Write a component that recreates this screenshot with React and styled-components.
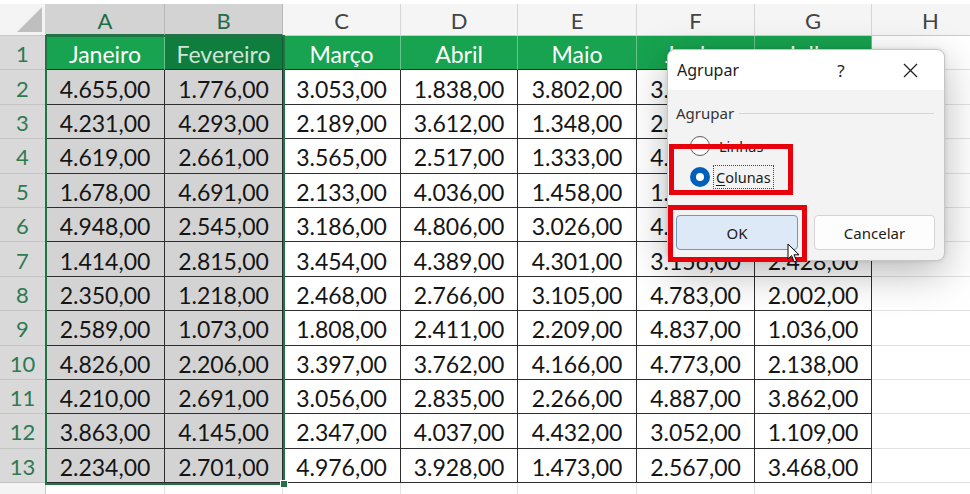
import React from 'react'
import styled, { createGlobalStyle, css } from 'styled-components'

const GlobalStyle = createGlobalStyle`
  html, body {
    margin: 0;
    padding: 0;
    background: #fff;
    overflow: hidden;
  }
`

const COLS = ['A', 'B', 'C', 'D', 'E', 'F', 'G', 'H']
const WIDTHS = [119, 118, 118, 117, 119, 118, 117, 118]

const MONTHS = ['Janeiro', 'Fevereiro', 'Março', 'Abril', 'Maio', 'Junho', 'Julho']

const DATA = [
  ['4.655,00', '1.776,00', '3.053,00', '1.838,00', '3.802,00', '3.417,00', '2.950,00'],
  ['4.231,00', '4.293,00', '2.189,00', '3.612,00', '1.348,00', '2.904,00', '1.283,00'],
  ['4.619,00', '2.661,00', '3.565,00', '2.517,00', '1.333,00', '4.112,00', '3.704,00'],
  ['1.678,00', '4.691,00', '2.133,00', '4.036,00', '1.458,00', '1.562,00', '4.219,00'],
  ['4.948,00', '2.545,00', '3.186,00', '4.806,00', '3.026,00', '4.330,00', '2.871,00'],
  ['1.414,00', '2.815,00', '3.454,00', '4.389,00', '4.301,00', '3.156,00', '2.428,00'],
  ['2.350,00', '1.218,00', '2.468,00', '2.766,00', '3.105,00', '4.783,00', '2.002,00'],
  ['2.589,00', '1.073,00', '1.808,00', '2.411,00', '2.209,00', '4.837,00', '1.036,00'],
  ['4.826,00', '2.206,00', '3.397,00', '3.762,00', '4.166,00', '4.773,00', '2.138,00'],
  ['4.210,00', '2.691,00', '3.056,00', '2.835,00', '2.266,00', '4.887,00', '3.862,00'],
  ['3.863,00', '4.145,00', '2.347,00', '4.037,00', '4.432,00', '3.052,00', '1.109,00'],
  ['2.234,00', '2.701,00', '4.976,00', '3.928,00', '1.473,00', '2.567,00', '3.468,00'],
]

const Page = styled.div`
  position: relative;
  width: 970px;
  height: 494px;
  overflow: hidden;
  padding-top: 4px;
  box-sizing: border-box;
  font-family: Lato, 'Liberation Sans', sans-serif;
`

const Grid = styled.div`
  position: relative;
  display: grid;
  grid-template-columns: 46px ${WIDTHS.map(w => w + 'px').join(' ')};
  grid-template-rows: 32px repeat(14, 34.4px);
  width: max-content;
`

const Corner = styled.div`
  display: flex;
  align-items: flex-end;
  justify-content: flex-end;
  padding: 0 3px 3px 0;
  background: #f4f4f4;
  border-right: 1px solid #d2d2d2;
  border-bottom: 1px solid #c8c8c8;
`

const CornerMark = styled.span`
  width: 25px;
  height: 25px;
  background: #bfbfbf;
  clip-path: polygon(100% 0, 100% 100%, 0 100%);
`

const ColHead = styled.div`
  display: flex;
  align-items: center;
  justify-content: center;
  padding-top: 2px;
  font-size: 22px;
  background: ${p => (p.$sel ? '#d3d3d3' : '#f5f5f5')};
  color: ${p => (p.$sel ? '#1f6b42' : '#444')};
  border-right: 1px solid ${p => (p.$sel ? '#b8b8b8' : '#d6d6d6')};
  border-bottom: ${p => (p.$sel ? '2px solid #217346' : '1px solid #cbcbcb')};
`

const RowHead = styled.div`
  display: flex;
  align-items: center;
  justify-content: center;
  padding-top: 2px;
  font-size: 22px;
  background: ${p => (p.$sel ? '#d9d9d9' : '#f4f4f4')};
  color: ${p => (p.$sel ? '#2e7a51' : '#555')};
  border-bottom: 1px solid #c4c4c4;
  border-right: 1px solid #c8c8c8;
`

const Cell = styled.div`
  display: flex;
  align-items: center;
  justify-content: center;
  padding-top: 3px;
  font-size: 23px;
  white-space: nowrap;
  overflow: hidden;
  ${p =>
    p.$kind === 'head' &&
    css`
      background: ${p.$sel ? '#0f7d3d' : '#17a34f'};
      color: ${p.$sel ? '#cfe6d7' : '#fff'};
      border-right: 1px solid ${p.$sel ? '#0b5f2e' : 'rgba(255,255,255,0.35)'};
      border-bottom: 1px solid #2c2c2c;
    `}
  ${p =>
    p.$kind === 'data' &&
    css`
      background: ${p.$sel ? '#d3d3d3' : '#fff'};
      color: #151515;
      border-right: 1px solid #2e2e2e;
      border-bottom: 1px solid #2e2e2e;
    `}
  ${p =>
    p.$kind === 'empty' &&
    css`
      background: #fff;
      border-right: 1px solid #e2e2e2;
      border-bottom: 1px solid #e2e2e2;
    `}
`

const SelectionFrame = styled.div`
  position: absolute;
  left: 45px;
  top: 31px;
  width: 240px;
  height: 450px;
  box-sizing: border-box;
  border: 2px solid #217346;
  pointer-events: none;
`

const FillHandle = styled.span`
  position: absolute;
  right: -5px;
  bottom: -5px;
  width: 6px;
  height: 6px;
  background: #217346;
  border: 1px solid #fff;
`

const Dialog = styled.div`
  position: absolute;
  left: 667px;
  top: 49px;
  width: 278px;
  box-sizing: border-box;
  background: #f3f3f3;
  border: 1px solid #c6c6c6;
  border-radius: 8px;
  box-shadow: 0 12px 40px rgba(0, 0, 0, 0.28), 0 0 4px rgba(0, 0, 0, 0.12);
  font-family: 'Noto Sans', 'Open Sans', sans-serif;
  color: #1b1b1b;
`

const TitleBar = styled.div`
  display: flex;
  align-items: center;
  height: 40px;
  padding-left: 9px;
  background: #fff;
  border-radius: 8px 8px 0 0;
`

const Title = styled.span`
  flex: 1;
  font-size: 16px;
`

const TitleButton = styled.span`
  display: flex;
  align-items: center;
  justify-content: center;
  width: 46px;
  margin-right: ${p => p.$gap}px;
  font-size: 17px;
  color: #222;
`

const Body = styled.div`
  display: flex;
  flex-direction: column;
  align-items: flex-start;
  padding: 13px 10px 10px 7px;
`

const Legend = styled.div`
  display: flex;
  align-items: center;
  align-self: stretch;
  height: 20px;
  padding-left: 1px;
  font-size: 15px;
  color: #333;
  &::after {
    content: '';
    flex: 1;
    height: 1px;
    margin-left: 5px;
    background: #d6d6d6;
  }
`

const Marked = styled.div`
  position: relative;
  &::after {
    content: '';
    position: absolute;
    top: ${p => p.$t}px;
    right: ${p => p.$r}px;
    bottom: ${p => p.$b}px;
    left: ${p => p.$l}px;
    border: 5px solid #e8000b;
    pointer-events: none;
  }
`

const RadioRow = styled.div`
  display: flex;
  align-items: center;
  height: 22px;
  margin-top: ${p => p.$top}px;
  margin-left: ${p => p.$left || 0}px;
  font-size: 14.5px;
`

const RadioCircle = styled.span`
  display: flex;
  align-items: center;
  justify-content: center;
  width: 20px;
  height: 20px;
  box-sizing: border-box;
  border-radius: 50%;
  ${p =>
    p.$checked
      ? css`
          background: #005fb8;
          &::after {
            content: '';
            width: 8px;
            height: 8px;
            border-radius: 50%;
            background: #fff;
          }
        `
      : css`
          background: #fbfbfb;
          border: 1px solid #5c5c5c;
        `}
`

const RadioLabel = styled.span`
  margin-left: ${p => (p.$focus ? 3 : 6)}px;
  padding: 0 2px;
  line-height: 22px;
  border: 1px dotted ${p => (p.$focus ? '#444' : 'transparent')};
`

const Key = styled.span`
  text-decoration: underline;
  text-underline-offset: 2px;
`

const ButtonRow = styled.div`
  display: flex;
  gap: 16px;
  margin-top: 27px;
  padding-left: 1px;
`

const Button = styled.div`
  display: flex;
  align-items: center;
  justify-content: center;
  width: ${p => p.$w}px;
  height: 35px;
  box-sizing: border-box;
  border-radius: 4px;
  font-size: 15px;
  color: #1b1b1b;
  background: ${p => (p.$primary ? '#dde9f6' : '#fdfdfd')};
  border: 1px solid ${p => (p.$primary ? '#6f97c2' : '#d4d4d4')};
`

const Cursor = styled.svg`
  position: absolute;
  left: 787px;
  top: 243px;
`

function CloseIcon() {
  return (
    <svg width="15" height="15" viewBox="0 0 15 15">
      <path d="M1 1 L14 14 M14 1 L1 14" stroke="#222" strokeWidth="1.3" fill="none" />
    </svg>
  )
}

export default function App() {
  const rows = []
  for (let r = 1; r <= 14; r++) {
    const sel = r <= 13
    rows.push(
      <RowHead key={'h' + r} $sel={sel}>
        {sel ? r : ''}
      </RowHead>
    )
    COLS.forEach((c, i) => {
      const key = c + r
      if (i > 6 || r > 13) {
        rows.push(<Cell key={key} $kind="empty" />)
      } else if (r === 1) {
        rows.push(
          <Cell key={key} $kind="head" $sel={i === 1}>
            {MONTHS[i]}
          </Cell>
        )
      } else {
        rows.push(
          <Cell key={key} $kind="data" $sel={i < 2}>
            {DATA[r - 2][i]}
          </Cell>
        )
      }
    })
  }

  return (
    <Page>
      <GlobalStyle />
      <Grid>
        <Corner>
          <CornerMark />
        </Corner>
        {COLS.map((c, i) => (
          <ColHead key={c} $sel={i < 2}>
            {c}
          </ColHead>
        ))}
        {rows}
        <SelectionFrame>
          <FillHandle />
        </SelectionFrame>
      </Grid>

      <Dialog>
        <TitleBar>
          <Title>Agrupar</Title>
          <TitleButton $gap={23}>?</TitleButton>
          <TitleButton $gap={11}>
            <CloseIcon />
          </TitleButton>
        </TitleBar>
        <Body>
          <Legend>Agrupar</Legend>
          <RadioRow $top={12} $left={15}>
            <RadioCircle />
            <RadioLabel>Linhas</RadioLabel>
          </RadioRow>
          <Marked $t={-13} $r={-19} $b={-7} $l={-21} style={{ marginLeft: 15 }}>
            <RadioRow $top={9}>
              <RadioCircle $checked />
              <RadioLabel $focus>
                <Key>C</Key>olunas
              </RadioLabel>
            </RadioRow>
          </Marked>
          <ButtonRow>
            <Marked $t={-10} $r={-9} $b={-12} $l={-8}>
              <Button $primary $w={122}>OK</Button>
            </Marked>
            <Button $w={121}>Cancelar</Button>
          </ButtonRow>
        </Body>
      </Dialog>

      <Cursor width="14" height="21" viewBox="0 0 14 21">
        <path
          d="M1 1 L1 16 L4.6 12.6 L7.2 18.8 L9.6 17.8 L7 11.8 L12 11.8 Z"
          fill="#fff"
          stroke="#000"
          strokeWidth="1"
          strokeLinejoin="round"
        />
      </Cursor>
    </Page>
  )
}
